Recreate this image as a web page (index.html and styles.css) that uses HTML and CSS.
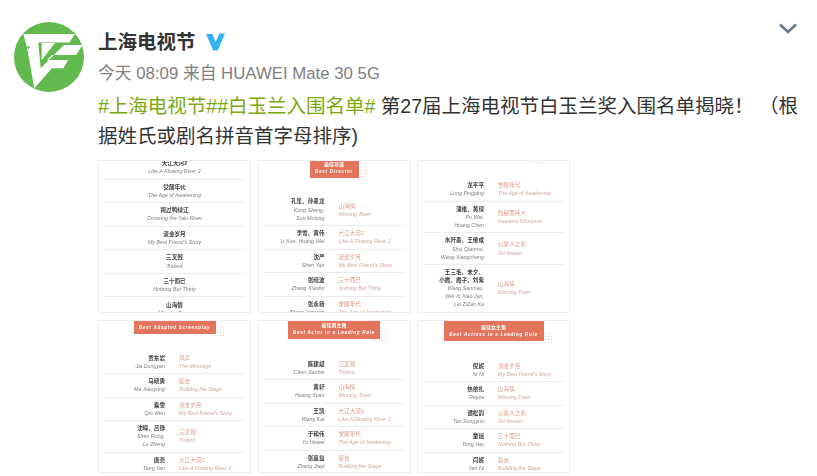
FILE: index.html
```html
<!DOCTYPE html>
<html lang="zh-CN">
<head>
<meta charset="UTF-8">
<title>上海电视节</title>
<link rel="stylesheet" href="styles.css">
</head>
<body>
<article class="post">
  <svg class="avatar" viewBox="0 0 70 70" aria-hidden="true">
    <circle cx="35" cy="35" r="35" fill="#62b94d"/>
    <path fill="#fff" d="M9.300 12H61L55.300 20.500H24.300L26.700 46.300L50 23H68.700L62 33H38L33 38H54.300L49.300 46.300H38L20.300 66.300L12.700 24Z"/>
    <path fill="#fff" d="M27.700 21H41L27.700 38Z"/>
    <circle cx="14.500" cy="25.500" r="1.200" fill="#62b94d"/>
  </svg>
  <div class="main">
    <div class="head">
      <h1 class="name">上海电视节
        <svg class="vip" viewBox="0 0 19 18" aria-hidden="true"><path fill="#38b0f6" d="M0 1H6.500L9.700 9L13.500 0.500H19L11.800 17.500H7.200Z"/></svg>
      </h1>
      <svg class="more" viewBox="0 0 18 11" aria-hidden="true"><path fill="none" stroke="#667585" stroke-width="2.500" d="M1 1.500L9 9L17 1.500"/></svg>
    </div>
    <div class="meta">今天 08:09 来自 HUAWEI Mate 30 5G</div>
    <p class="text"><a class="tag">#上海电视节#</a><a class="tag">#白玉兰入围名单#</a> 第27届上海电视节白玉兰奖入围名单揭晓！ （根据姓氏或剧名拼音首字母排序)</p>

    <div class="pics">
      <!-- 最佳电视剧 -->
      <div class="pic pic-drama">
        <div class="inner">
          <div class="row center"><b>大江大河2</b><i>Like A Flowing River 2</i></div>
          <div class="row center"><b>觉醒年代</b><i>The Age of Awakening</i></div>
          <div class="row center"><b>跨过鸭绿江</b><i>Crossing the Yalu River</i></div>
          <div class="row center"><b>流金岁月</b><i>My Best Friend's Story</i></div>
          <div class="row center"><b>三叉戟</b><i>Trident</i></div>
          <div class="row center"><b>三十而已</b><i>Nothing But Thirty</i></div>
          <div class="row center"><b>山海情</b><i>Minning Town</i></div>
        </div>
      </div>

      <!-- 最佳导演 -->
      <div class="pic">
        <div class="banner b-director"><span>最佳导演</span><em>Best Director</em><u class="dots"></u></div>
        <div class="row"><div class="who"><b>孔笙、孙墨龙</b><i>Kong Sheng,</i><i>Sun Molong</i></div><div class="show"><b>山海情</b><i>Minning Town</i></div></div>
        <div class="row"><div class="who"><b>李雪、黄伟</b><i>Li Xue, Huang Wei</i></div><div class="show"><b>大江大河2</b><i>Like A Flowing River 2</i></div></div>
        <div class="row"><div class="who"><b>沈严</b><i>Shen Yan</i></div><div class="show"><b>流金岁月</b><i>My Best Friend's Story</i></div></div>
        <div class="row"><div class="who"><b>张晓波</b><i>Zhang Xiaobo</i></div><div class="show"><b>三十而已</b><i>Nothing But Thirty</i></div></div>
        <div class="row"><div class="who"><b>张永新</b><i>Zhang Yongxin</i></div><div class="show"><b>觉醒年代</b><i>The Age of Awakening</i></div></div>
      </div>

      <!-- 最佳编剧 -->
      <div class="pic pic-writer">
        <u class="dots dots-top"></u>
        <div class="row"><div class="who"><b>龙平平</b><i>Long Pingping</i></div><div class="show"><b>觉醒年代</b><i>The Age of Awakening</i></div></div>
        <div class="row"><div class="who"><b>蒲维、黄琛</b><i>Pu Wei,</i><i>Huang Chen</i></div><div class="show"><b>隐秘而伟大</b><i>Fearless Whispers</i></div></div>
        <div class="row"><div class="who"><b>水阡墨、王倦成</b><i>Shui Qianmo,</i><i>Wang Xiangcheng</i></div><div class="show"><b>以家人之名</b><i>Go Ahead</i></div></div>
        <div class="row"><div class="who"><b>王三毛、未夕、</b><b>小霞、霞子、刘紫</b><i>Wang Sanmao,</i><i>Wei Xi,Xiao Jan,</i><i>Lei ZiZan Ka</i></div><div class="show"><b>山海情</b><i>Minning Town</i></div></div>
      </div>

      <!-- 最佳改编 -->
      <div class="pic">
        <div class="banner b-adapted"><em>Best Adapted Screenplay</em><u class="dots"></u></div>
        <div class="row"><div class="who"><b>贾东岩</b><i>Jia Dongyan</i></div><div class="show"><b>风声</b><i>The Message</i></div></div>
        <div class="row"><div class="who"><b>马晓勇</b><i>Ma Xiaoyong</i></div><div class="show"><b>装台</b><i>Building the Stage</i></div></div>
        <div class="row"><div class="who"><b>秦雯</b><i>Qin Wen</i></div><div class="show"><b>流金岁月</b><i>My Best Friend's Story</i></div></div>
        <div class="row"><div class="who"><b>沈嵘、吕铮</b><i>Shen Rong,</i><i>Lv Zheng</i></div><div class="show"><b>三叉戟</b><i>Trident</i></div></div>
        <div class="row"><div class="who"><b>唐尧</b><i>Tang Yao</i></div><div class="show"><b>大江大河2</b><i>Like A Flowing River 2</i></div></div>
      </div>

      <!-- 最佳男主角 -->
      <div class="pic">
        <div class="banner b-actor"><span>最佳男主角</span><em>Best Actor in a Leading Role</em><u class="dots"></u></div>
        <div class="row"><div class="who"><b>陈建斌</b><i>Chen Jianbin</i></div><div class="show"><b>三叉戟</b><i>Trident</i></div></div>
        <div class="row"><div class="who"><b>黄轩</b><i>Huang Xuan</i></div><div class="show"><b>山海情</b><i>Minning Town</i></div></div>
        <div class="row"><div class="who"><b>王凯</b><i>Wang Kai</i></div><div class="show"><b>大江大河2</b><i>Like A Flowing River 2</i></div></div>
        <div class="row"><div class="who"><b>于和伟</b><i>Yu Hewei</i></div><div class="show"><b>觉醒年代</b><i>The Age of Awakening</i></div></div>
        <div class="row"><div class="who"><b>张嘉益</b><i>Zhang Jiayi</i></div><div class="show"><b>装台</b><i>Building the Stage</i></div></div>
      </div>

      <!-- 最佳女主角 -->
      <div class="pic">
        <div class="banner b-actress"><span>最佳女主角</span><em>Best Actress in a Leading Role</em><u class="dots"></u></div>
        <div class="row"><div class="who"><b>倪妮</b><i>Ni Ni</i></div><div class="show"><b>流金岁月</b><i>My Best Friend's Story</i></div></div>
        <div class="row"><div class="who"><b>热依扎</b><i>Reyza</i></div><div class="show"><b>山海情</b><i>Minning Town</i></div></div>
        <div class="row"><div class="who"><b>谭松韵</b><i>Tan Songyun</i></div><div class="show"><b>以家人之名</b><i>Go Ahead</i></div></div>
        <div class="row"><div class="who"><b>童瑶</b><i>Tong Yao</i></div><div class="show"><b>三十而已</b><i>Nothing But Thirty</i></div></div>
        <div class="row"><div class="who"><b>闫妮</b><i>Yan Ni</i></div><div class="show"><b>装台</b><i>Building the Stage</i></div></div>
      </div>
    </div>
  </div>
</article>
</body>
</html>
```

FILE: styles.css
```css
:root{
  --ink:#333;
  --green:#7aa80e;
  --salmon:#e2755b;
  font-family:"Liberation Sans","Noto Sans CJK SC",sans-serif;
}
*{box-sizing:border-box}
html,body{margin:0;padding:0;background:#fff;overflow:hidden}

/* ===== Post ===== */
.post{display:flex;gap:14px;padding:22px 0 0 14px;color:var(--ink)}
.avatar{width:70px;height:70px;flex:none}
.main{width:700px}
.head{display:flex;align-items:center;justify-content:space-between;height:40px}
.name{margin:0;font-size:19.500px;font-weight:700;display:flex;align-items:center;gap:10px;line-height:40px}
.vip{width:19px;height:18px}
.more{width:18px;height:11px;margin:-28px 1px 0 0}
.meta{font-size:16.800px;line-height:24px;color:#808080}
.text{margin:5px 0 0;font-size:19.500px;line-height:30px}
.tag{color:var(--green)}

/* ===== Thumbnails ===== */
.pics{display:grid;grid-template-columns:repeat(3,153px);grid-auto-rows:153px;gap:7px 6.500px;margin-top:9px}
.pic{position:relative;overflow:hidden;background:#fff;border:1px solid #eee;padding:0 6px;filter:blur(.6px)}
.pic-drama .inner{margin-top:-5px}
.pic-writer{padding-top:17px}

.banner{position:relative;margin:-1px auto 0;background:var(--salmon);color:#fff;text-align:center;font-size:4.500px;line-height:8px;display:flex;flex-direction:column;justify-content:flex-end;padding-bottom:2px}
.banner span{font-size:5px;font-weight:700}
.banner em{font-weight:700;letter-spacing:.75px;white-space:nowrap}
.b-director{width:49px;height:18px;margin-bottom:16.300px}
.b-adapted{width:82px;height:14px;margin-bottom:16.400px}
.b-actor{width:92px;height:19px;margin-bottom:17.400px}
.b-actress{width:100px;height:21px;margin-bottom:17.400px}

/* dotted flourish sitting behind the banner corner */
.dots{position:absolute;right:-8px;bottom:-3px;width:14px;height:12px;background:radial-gradient(#f4cfc5 35%,transparent 40%) 0 0/3px 3px;z-index:-1}
.dots-top{right:auto;bottom:auto;left:111px;top:0;height:3px;width:16px;background-image:radial-gradient(#ddd 35%,transparent 40%)}

.row{display:grid;grid-template-columns:60px 1fr;column-gap:14px;align-items:center;padding:3.200px 0;border-bottom:1px solid #ececec;line-height:8.100px;font-size:5.600px;white-space:nowrap}
.row:last-child{border-bottom:none}
.row b,.row i{display:block}
.row b{font-weight:700;color:#3c3c3c}
.row i{font-size:5.300px;color:#7d7d7d}
.row.center{display:block;text-align:center}
.who{text-align:right}
.show b{color:#d99b8a;font-weight:400}
.show i{color:#cda99e}
```
